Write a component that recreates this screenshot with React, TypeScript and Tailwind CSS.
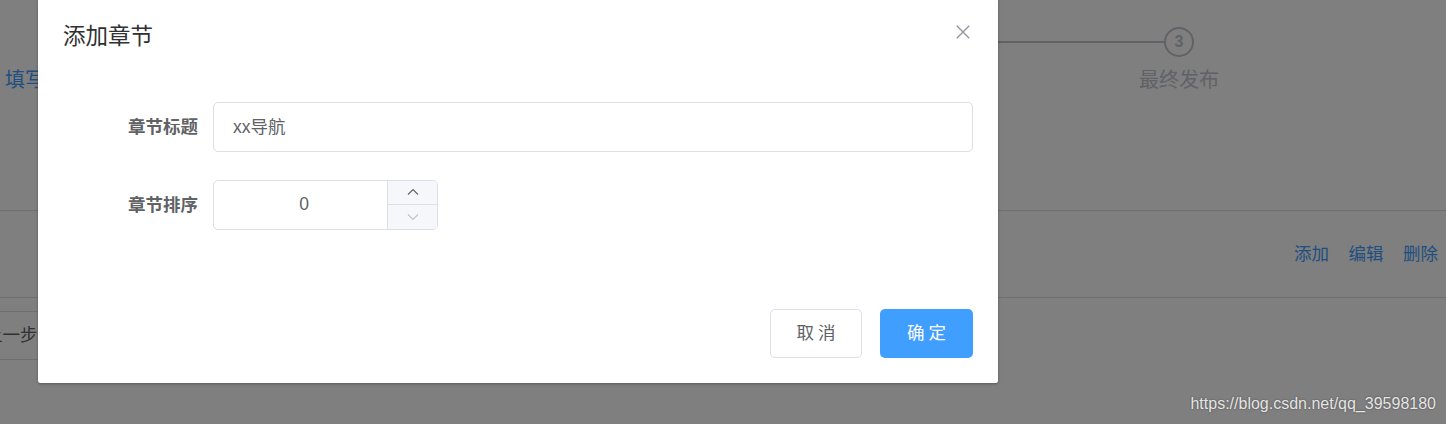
import React from "react";

const FONT = { fontFamily: '"Liberation Sans", "Noto Sans CJK SC", sans-serif' };

function Chevron({ up, color }: { up?: boolean; color: string }) {
  return (
    <svg width="12" height="8" viewBox="0 0 12 8">
      <path
        d={up ? "M1 6.5 L6 1.5 L11 6.5" : "M1 1.5 L6 6.5 L11 1.5"}
        fill="none"
        stroke={color}
        strokeWidth="1.1"
      />
    </svg>
  );
}

export default function App() {
  return (
    <div className="relative w-[1446px] h-[424px] overflow-hidden bg-white" style={FONT}>
      {/* underlying page */}
      <div className="flex flex-col">
        <div className="h-[211px] border-b border-[#DCDFE6] pt-[27px] flex flex-col">
          <div className="h-[30px] flex items-center">
            <div className="w-[400px]" />
            <div className="flex-1 h-[2.5px] bg-[#C0C4CC]" />
            <div className="w-[30px] h-[30px] rounded-full border-[2.5px] border-[#C0C4CC] flex items-center justify-center text-[16px] font-bold text-[#C0C4CC] leading-none">
              3
            </div>
            <div className="w-[252px]" />
          </div>
          <div className="flex mt-[8px] leading-[30px] text-[20px]">
            <div className="pl-[5px] text-[#409EFF]">填写课程基本信息</div>
            <div className="flex-1" />
            <div className="w-[80px] text-center text-[#C0C4CC]">最终发布</div>
            <div className="w-[227px]" />
          </div>
        </div>
        <div className="h-[87px] border-b border-[#DCDFE6] flex items-center justify-end pr-[8px] gap-[19.5px] text-[17.5px] text-[#409EFF]">
          <span>添加</span>
          <span>编辑</span>
          <span>删除</span>
        </div>
        <div className="mt-[13px] flex">
          <div className="ml-[-41px] h-[49px] pl-[25px] pr-[25px] border border-[#DCDFE6] rounded-[5px] flex items-center text-[17.5px] text-[#606266]">
            上一步
          </div>
        </div>
      </div>

      {/* overlay */}
      <div className="absolute inset-0 bg-black/50" />

      {/* dialog */}
      <div className="absolute left-[38px] top-[-3px] w-[960px] bg-white rounded-[2.5px] shadow-[0_1px_3px_rgba(0,0,0,0.3)]">
        <div className="relative pt-[25px] px-[25px] pb-[12.5px]">
          <div className="text-[22.5px] leading-[30px] text-[#303133]">添加章节</div>
          <div className="absolute top-[25px] right-[25px] w-[20px] h-[20px]">
            <svg width="20" height="20" viewBox="0 0 20 20">
              <path d="M3.8 3.8 L16.2 16.2 M16.2 3.8 L3.8 16.2" stroke="#909399" strokeWidth="1.3" fill="none" />
            </svg>
          </div>
        </div>
        <div className="px-[25px] pt-[37.5px] pb-[65px]">
          <div className="flex">
            <div className="w-[150px] pr-[15px] text-right leading-[50px] text-[17.5px] font-bold text-[#606266]">
              章节标题
            </div>
            <div className="flex-1 h-[50px] border border-[#DCDFE6] rounded-[5px] flex items-center px-[19px] text-[17.5px] text-[#606266]">
              xx导航
            </div>
          </div>
          <div className="flex mt-[27.5px]">
            <div className="w-[150px] pr-[15px] text-right leading-[50px] text-[17.5px] font-bold text-[#606266]">
              章节排序
            </div>
            <div className="w-[225px] h-[50px] border border-[#DCDFE6] rounded-[5px] flex overflow-hidden">
              <div className="flex-1 flex items-center justify-center pl-[7px] text-[17.5px] text-[#606266]">0</div>
              <div className="w-[50px] border-l border-[#DCDFE6] bg-[#F5F7FA] flex flex-col">
                <div className="flex-1 border-b border-[#DCDFE6] flex items-center justify-center">
                  <Chevron up color="#606266" />
                </div>
                <div className="flex-1 flex items-center justify-center">
                  <Chevron color="#C0C4CC" />
                </div>
              </div>
            </div>
          </div>
        </div>
        <div className="px-[25px] pt-[14px] pb-[25px] flex justify-end gap-[18px]">
          <div className="w-[92px] h-[49px] border border-[#DCDFE6] rounded-[5px] flex items-center justify-center text-[17.5px] text-[#606266] tracking-[4px] pl-[4px]">
            取消
          </div>
          <div className="w-[93px] h-[49px] rounded-[5px] bg-[#409EFF] flex items-center justify-center text-[17.5px] text-white tracking-[4px] pl-[4px]">
            确定
          </div>
        </div>
      </div>

      {/* watermark */}
      <div className="absolute right-[10px] top-[393px] text-[16px] leading-[22px] text-[#e6e6e6] [text-shadow:0_0_2px_rgba(0,0,0,0.5)]">
        https://blog.csdn.net/qq_39598180
      </div>
    </div>
  );
}
